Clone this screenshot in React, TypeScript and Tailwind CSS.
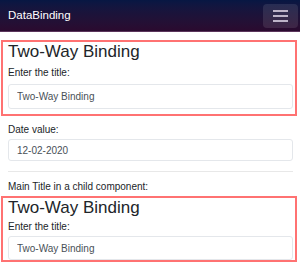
import React from "react";

const FONT = '"Liberation Sans", Arial, sans-serif';

function Editor({ compact }: { compact?: boolean }) {
  return (
    <div
      className={
        compact
          ? "ml-[1px] mr-[3px] border-2 border-[#ff7272] pl-[5px] pr-[2px] pb-0"
          : "ml-[1px] mr-[3px] border-2 border-[#ff7272] pl-[5px] pr-[2px] pb-[5px]"
      }
    >
      <h3
        className={
          compact
            ? "text-[17px] leading-[20px] text-[#212529] mb-[3px]"
            : "text-[17px] leading-[20px] text-[#212529] mb-[5px]"
        }
      >
        Two-Way Binding
      </h3>
      <div
        className={
          compact
            ? "text-[10px] leading-[12px] text-[#212529] mb-[3px]"
            : "text-[10px] leading-[12px] text-[#212529] mb-[5px]"
        }
      >
        Enter the title:
      </div>
      <input
        readOnly
        value="Two-Way Binding"
        className={
          compact
            ? "block w-full h-[24px] rounded-[3px] border border-[#e4e7eb] px-[8px] text-[10px] text-[#495057] outline-none"
            : "block w-full h-[25px] rounded-[3px] border border-[#e4e7eb] px-[8px] text-[10px] text-[#495057] outline-none"
        }
        style={{ fontFamily: FONT }}
      />
    </div>
  );
}

export default function App() {
  return (
    <div className="w-[300px] h-[263px] overflow-hidden bg-white" style={{ fontFamily: FONT }}>
      <div className="h-[32px] flex items-center justify-between pl-[8px] pr-[2px] border-b border-[#5b355c] bg-gradient-to-b from-[#071743] to-[#2b0a2f]">
        <span className="text-white text-[11.5px]">DataBinding</span>
        <div className="w-[35px] h-[24px] rounded-[4px] bg-white/10 flex flex-col items-center justify-center gap-[3px]">
          <span className="block w-[15px] h-[2px] bg-[#bdb3c8]" />
          <span className="block w-[15px] h-[2px] bg-[#bdb3c8]" />
          <span className="block w-[15px] h-[2px] bg-[#bdb3c8]" />
        </div>
      </div>
      <div className="pt-[8px]">
        <Editor />
        <div className="pl-[8px] pr-[7px] pt-[8px]">
          <div className="text-[10px] leading-[12px] text-[#212529] mb-[3px]">Date value:</div>
          <input
            readOnly
            value="12-02-2020"
            className="block w-full h-[22px] rounded-[3px] border border-[#e4e7eb] px-[8px] text-[10px] text-[#495057] outline-none"
            style={{ fontFamily: FONT }}
          />
          <hr className="mt-[10px] mb-[9px] border-[#e8e8e8]" />
          <div className="text-[10px] leading-[12px] text-[#212529] mb-[3px]">Main Title in a child component:</div>
        </div>
        <Editor compact />
      </div>
    </div>
  );
}
